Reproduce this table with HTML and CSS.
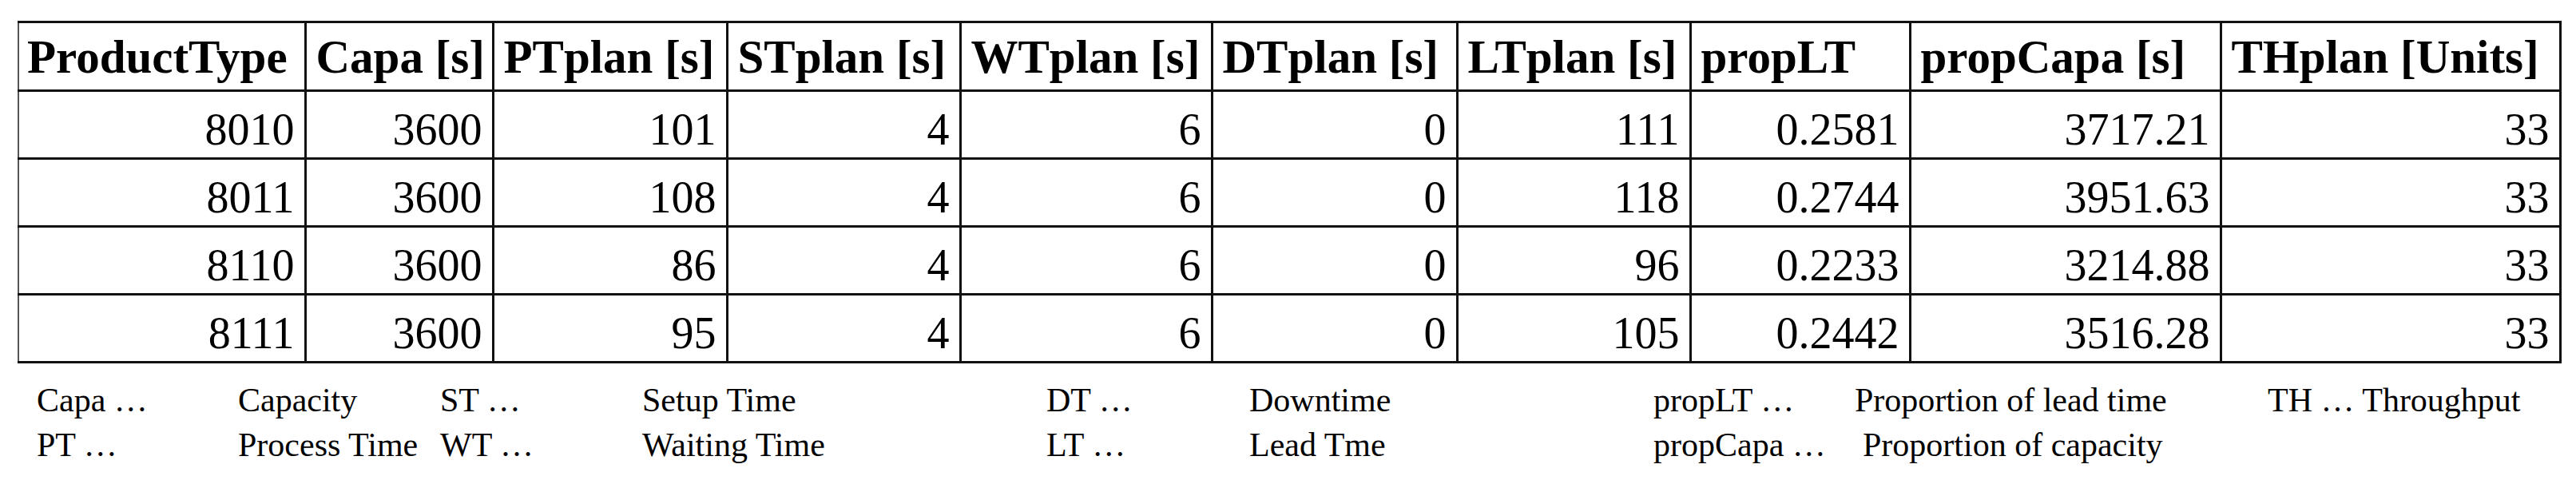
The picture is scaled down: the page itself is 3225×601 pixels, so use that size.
FILE: index.html
```html
<!DOCTYPE html>
<html lang="en">
<head>
<meta charset="utf-8">
<title>Product plan table</title>
<link rel="stylesheet" href="styles.css">
</head>
<body>
<div class="page">
  <table class="plan">
    <colgroup>
      <col class="c1"><col class="c2"><col class="c3"><col class="c4"><col class="c5">
      <col class="c6"><col class="c7"><col class="c8"><col class="c9"><col class="c10">
    </colgroup>
    <thead>
      <tr>
        <th>ProductType</th><th>Capa [s]</th><th>PTplan [s]</th><th>STplan [s]</th><th>WTplan [s]</th>
        <th>DTplan [s]</th><th>LTplan [s]</th><th>propLT</th><th>propCapa [s]</th><th>THplan [Units]</th>
      </tr>
    </thead>
    <tbody>
      <tr><td>8010</td><td>3600</td><td>101</td><td>4</td><td>6</td><td>0</td><td>111</td><td>0.2581</td><td>3717.21</td><td>33</td></tr>
      <tr><td>8011</td><td>3600</td><td>108</td><td>4</td><td>6</td><td>0</td><td>118</td><td>0.2744</td><td>3951.63</td><td>33</td></tr>
      <tr><td>8110</td><td>3600</td><td>86</td><td>4</td><td>6</td><td>0</td><td>96</td><td>0.2233</td><td>3214.88</td><td>33</td></tr>
      <tr><td>8111</td><td>3600</td><td>95</td><td>4</td><td>6</td><td>0</td><td>105</td><td>0.2442</td><td>3516.28</td><td>33</td></tr>
    </tbody>
  </table>
  <div class="legend">
    <span>Capa …</span><span>Capacity</span><span>ST …</span><span>Setup Time</span><span>DT …</span><span>Downtime</span><span>propLT …</span><span>Proportion of lead time</span><span>TH … Throughput</span>
    <span>PT …</span><span>Process Time</span><span>WT …</span><span>Waiting Time</span><span>LT …</span><span>Lead Tme</span><span>propCapa …</span><span class="indent">Proportion of capacity</span><span></span>
  </div>
</div>
</body>
</html>
```
FILE: styles.css
```css
html, body {
  margin: 0;
  padding: 0;
  background: #ffffff;
}

body {
  font-family: "Liberation Serif", "Times New Roman", serif;
  color: #000000;
}

.page {
  padding: 26px 0 0 22px;
}

.plan {
  border-collapse: collapse;
  table-layout: fixed;
  width: 3182px;
}

.c1 { width: 359px; }
.c2 { width: 235px; }
.c3 { width: 293px; }
.c4 { width: 292px; }
.c5 { width: 315px; }
.c6 { width: 307px; }
.c7 { width: 292px; }
.c8 { width: 275px; }
.c9 { width: 389px; }
.c10 { width: 425px; }

.plan th,
.plan td {
  border: 3px solid #111111;
  padding: 0 12px;
  white-space: nowrap;
  overflow: hidden;
}

.plan th:first-child,
.plan td:first-child {
  border-left: 2px solid #555555;
  padding-left: 10px;
}

.plan th {
  height: 81px;
  font-size: 59px;
  font-weight: bold;
  text-align: left;
  vertical-align: middle;
  padding-top: 2px;
}

.plan td {
  height: 70px;
  font-size: 56px;
  font-weight: normal;
  text-align: right;
  vertical-align: middle;
  padding-top: 12px;
  padding-bottom: 0;
}

.legend {
  display: grid;
  grid-template-columns: 252px 253px 253px 506px 254px 506px 252px 517px auto;
  margin: 18px 0 0 24px;
  font-size: 42px;
  line-height: 56px;
  white-space: nowrap;
}

.legend .indent {
  padding-left: 10px;
}
```
